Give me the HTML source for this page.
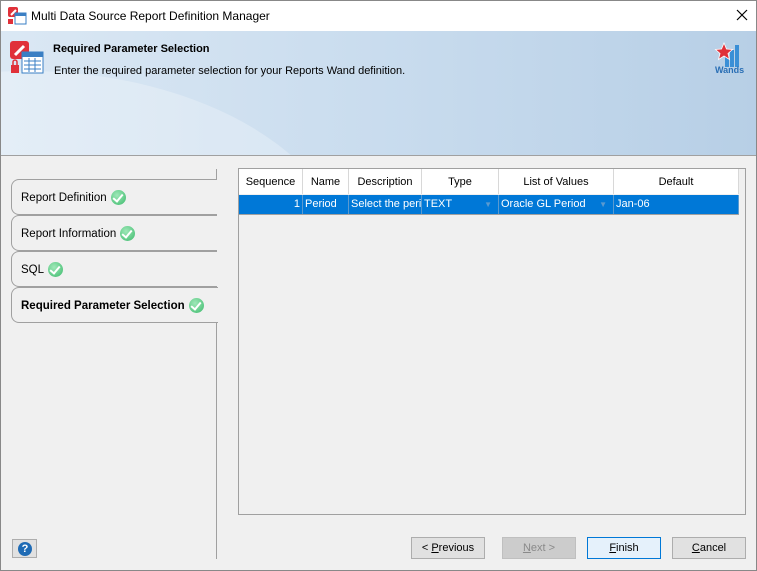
<!DOCTYPE html>
<html><head><style>
*{box-sizing:border-box;margin:0;padding:0}
body{width:757px;height:571px;overflow:hidden;font-family:"Liberation Sans",sans-serif;font-size:11px;color:#000;background:#f0f0f0;position:relative}
.abs{position:absolute}
.win{left:0;top:0;width:757px;height:571px;border:1px solid #888}
.title{left:1px;top:1px;width:755px;height:30px;background:#fff}
.hdr{left:1px;top:31px;width:755px;height:124px;background:linear-gradient(90deg,#dbe8f4 0%,#c9dcee 50%,#b7cfe6 100%);overflow:hidden}
.tab{left:11px;width:206px;height:36px;border:1px solid #a0a0a0;border-right:none;border-radius:8px 0 0 8px;background:#f0f0f0;padding:10px 0 0 9px;font-size:11.5px}
.chk{display:inline-block;width:15px;height:15px;border-radius:50%;background:radial-gradient(circle at 40% 35%,#9fe8b8,#3cba6c);vertical-align:-4px;margin-left:4px;position:relative}
.chk:after{content:"";position:absolute;left:4px;top:2px;width:4px;height:8px;border:solid #fff;border-width:0 2px 2px 0;transform:rotate(40deg)}
.grid{left:238px;top:168px;width:508px;height:347px;border:1px solid #a0a0a0;background:#f0f0f0}
.th{top:0;height:25px;background:#fff;border-right:1px solid #d8d8d8;text-align:center;line-height:26px}
.td{top:26px;height:19px;background:#0078d7;color:#fff;border-right:1px solid #5a9ad0;line-height:19px;padding-left:2px;white-space:nowrap;overflow:hidden}
.btn{top:537px;height:22px;width:74px;border:1px solid #adadad;background:#e1e1e1;text-align:center;line-height:20px}
</style></head><body>
<div class="abs win"></div>
<div class="abs title">
 <svg class="abs" style="left:7px;top:6px" width="19" height="19"><rect x="0" y="0" width="10" height="10" rx="2" fill="#e0313a"/><path d="M3 8 L8 3" stroke="#fff" stroke-width="2"/><rect x="7" y="6" width="11" height="11" fill="#fff" stroke="#3a7fc4"/><rect x="7" y="6" width="11" height="3" fill="#3a7fc4"/><rect x="0" y="12" width="5" height="5" fill="#e0313a"/></svg>
 <div class="abs" style="left:30px;top:8px;font-size:12px">Multi Data Source Report Definition Manager</div>
 <svg class="abs" style="left:735px;top:8px" width="12" height="12"><path d="M1 1L11 11M11 1L1 11" stroke="#000" stroke-width="1.2"/></svg>
</div>
<div class="abs hdr">
 <div class="abs" style="left:-300px;top:40px;width:650px;height:400px;border-radius:50%;background:rgba(255,255,255,0.25)"></div>
 <svg class="abs" style="left:9px;top:10px" width="34" height="34"><rect x="0" y="0" width="19" height="18" rx="3" fill="#e0313a"/><path d="M5 14 L14 5" stroke="#fff" stroke-width="3"/><rect x="12" y="11" width="21" height="21" fill="#fff" stroke="#3a7fc4"/><rect x="12" y="11" width="21" height="5" fill="#3a7fc4"/><path d="M14 20h17M14 24h17M14 28h17M19 17v14M25 17v14" stroke="#3a7fc4"/><rect x="1" y="24" width="8" height="8" fill="#e0313a"/><path d="M3 24v-3a2 2 0 0 1 4 0v3" stroke="#e0313a" fill="none" stroke-width="1.5"/></svg>
 <div class="abs" style="left:52px;top:12px;font-weight:bold">Required Parameter Selection</div>
 <div class="abs" style="left:53px;top:34px">Enter the required parameter selection for your Reports Wand definition.</div>
 <svg class="abs" style="left:713px;top:9px" width="32" height="34"><rect x="16" y="10" width="4" height="17" fill="#3a8fd6"/><rect x="21" y="5" width="4" height="22" fill="#3a8fd6"/><rect x="11" y="15" width="4" height="12" fill="#3a8fd6"/><path d="M10 3l2.5 6 6 .5-4.5 4 1.5 6-5.5-3.5-5.5 3.5 1.5-6-4.5-4 6-.5z" fill="#e0313a" stroke="#fff" stroke-width=".8"/><text x="1" y="33" font-size="9" font-weight="bold" fill="#2a6fb5" font-family="Liberation Sans">Wands</text></svg>
</div>
<div class="abs" style="left:1px;top:155px;width:755px;height:1px;background:#a0a0a0"></div>
<div class="abs" style="left:216px;top:169px;width:1px;height:390px;background:#a0a0a0"></div>
<div class="abs tab" style="top:179px">Report Definition<span class="chk"></span></div>
<div class="abs tab" style="top:215px">Report Information<span class="chk"></span></div>
<div class="abs tab" style="top:251px">SQL<span class="chk"></span></div>
<div class="abs tab" style="top:287px;border-right:none;width:207px;font-weight:bold">Required Parameter Selection<span class="chk"></span></div>
<div class="abs grid">
 <div class="abs th" style="left:0;width:64px">Sequence</div>
 <div class="abs th" style="left:64px;width:46px">Name</div>
 <div class="abs th" style="left:110px;width:73px">Description</div>
 <div class="abs th" style="left:183px;width:77px">Type</div>
 <div class="abs th" style="left:260px;width:115px">List of Values</div>
 <div class="abs th" style="left:375px;width:125px">Default</div>
 <div class="abs td" style="left:0;width:64px;text-align:right;padding-right:2px">1</div>
 <div class="abs td" style="left:64px;width:46px">Period</div>
 <div class="abs td" style="left:110px;width:73px">Select the period</div>
 <div class="abs td" style="left:183px;width:77px">TEXT<span class="abs" style="right:6px;color:#5a9ad0;font-size:8px">▼</span></div>
 <div class="abs td" style="left:260px;width:115px">Oracle GL Period<span class="abs" style="right:6px;color:#5a9ad0;font-size:8px">▼</span></div>
 <div class="abs td" style="left:375px;width:125px">Jan-06</div>
 <div class="abs" style="left:0;top:45px;width:500px;height:1px;background:#a0a0a0"></div>
</div>
<div class="abs" style="left:12px;top:539px;width:25px;height:19px;border:1px solid #adadad;background:#e1e1e1"><div class="abs" style="left:5px;top:2px;width:14px;height:14px;border-radius:50%;background:#1f6bb5;color:#fff;font-weight:bold;font-size:11px;text-align:center;line-height:14px">?</div></div>
<div class="abs btn" style="left:411px">&lt; <u>P</u>revious</div>
<div class="abs btn" style="left:502px;background:#cccccc;border-color:#bfbfbf;color:#8a8a8a"><u>N</u>ext &gt;</div>
<div class="abs btn" style="left:587px;border:1px solid #0078d7;background:#e5f1fb"><u>F</u>inish</div>
<div class="abs btn" style="left:672px"><u>C</u>ancel</div>
</body></html>
